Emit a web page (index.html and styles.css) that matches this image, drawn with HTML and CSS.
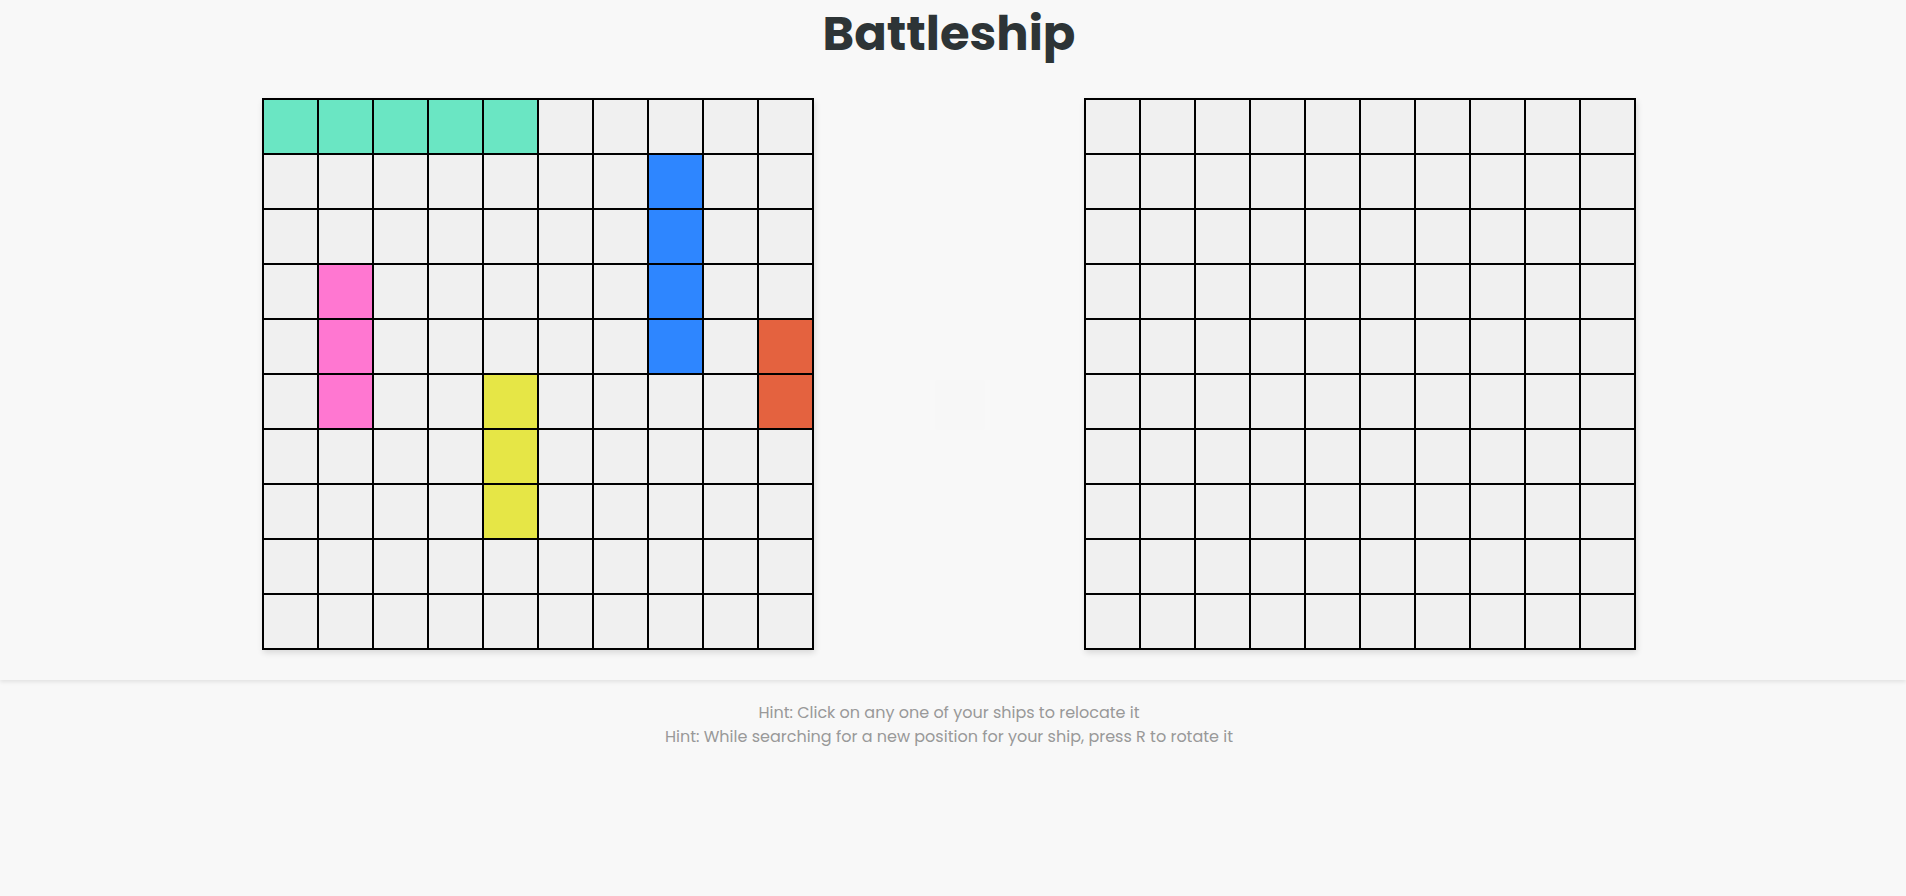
FILE: index.html
```html
<!DOCTYPE html>
<html lang="en">
<head>
    <meta charset="utf-8">
    <title>Battleship</title>
    <link rel="stylesheet" href="styles.css">
</head>
<body>
<div class="game">
    <h1 class="title">Battleship</h1>
    <div class="boards">
        <div class="board" id="player"></div>
        <div class="middle">
            <div class="turn"></div>
        </div>
        <div class="board" id="enemy"></div>
    </div>
</div>
<div class="hints">
    <p>Hint: Click on any one of your ships to relocate it</p>
    <p>Hint: While searching for a new position for your ship, press R to rotate it</p>
</div>

<script>
    (function () {
        // ships placed on the player's board: colour, start row, start col, length, vertical?
        var ships = [
            { cls: 'carrier', row: 0, col: 0, len: 5, down: false },
            { cls: 'battleship', row: 1, col: 7, len: 4, down: true },
            { cls: 'cruiser', row: 3, col: 1, len: 3, down: true },
            { cls: 'submarine', row: 5, col: 4, len: 3, down: true },
            { cls: 'destroyer', row: 4, col: 9, len: 2, down: true }
        ];

        function build(board) {
            var cells = [];
            for (var i = 0; i < 100; i++) {
                var cell = document.createElement('div');
                cell.className = 'cell';
                board.appendChild(cell);
                cells.push(cell);
            }
            return cells;
        }

        var mine = build(document.getElementById('player'));
        build(document.getElementById('enemy'));

        ships.forEach(function (s) {
            for (var k = 0; k < s.len; k++) {
                var r = s.down ? s.row + k : s.row,
                    c = s.down ? s.col : s.col + k;
                mine[r * 10 + c].classList.add(s.cls);
            }
        });
    })();
</script>
</body>
</html>
```

FILE: styles.css
```css
* {
    padding: 0;
    margin: 0;
    box-sizing: border-box;
}
html, body {
    height: 100%;
}
body {
    background-color: #f8f8f8;
    font-family: "Poppins", "Open Sans", sans-serif;
}
.game {
    padding-bottom: 30px;
    box-shadow: 0 2px 4px rgba(0, 0, 0, 0.09);
}
.title {
    padding: 2px 8px 0 0;
    text-align: center;
    font-size: 48px;
    line-height: 64px;
    font-weight: 700;
    color: #2d3436;
}
.boards {
    display: flex;
    margin-top: 32px;
    padding-left: 262px;
}
.board {
    display: grid;
    grid-template-columns: repeat(10, 55px);
    grid-auto-rows: 55px;
    border: 1px solid #000;
    box-shadow: 1px 3px 6px rgba(0, 0, 0, 0.12);
}
.cell {
    border: 1px solid #000;
    background-color: #f0f0f0;
}
.carrier { background-color: #6ae6c3; }
.battleship { background-color: #2e86ff; }
.cruiser { background-color: #ff77d1; }
.submarine { background-color: #e6e646; }
.destroyer { background-color: #e4623f; }

.middle {
    width: 270px;
    padding-top: 283px;
    padding-left: 122px;
}
.turn {
    width: 48px;
    height: 48px;
    background-color: #f7f7f7;
    box-shadow: 0 0 2px rgba(0, 0, 0, 0.02);
}
.hints {
    padding: 21px 8px 0 0;
    text-align: center;
    font-size: 16px;
    line-height: 24px;
    color: #999;
}
```
